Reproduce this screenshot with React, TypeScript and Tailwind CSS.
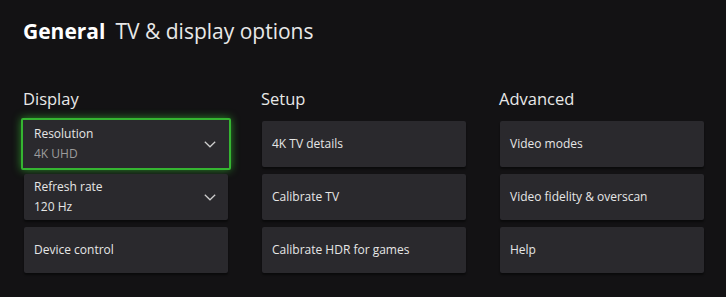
import React from "react";

const Chevron = () => (
  <svg width="12" height="7" viewBox="0 0 12 7" fill="none" className="shrink-0">
    <path d="M0.8 0.8 L6 5.8 L11.2 0.8" stroke="#cfcfcf" strokeWidth="1.2" />
  </svg>
);

type Item = { label: string; value?: string; valueDim?: boolean; dropdown?: boolean; focused?: boolean };

const Tile = ({ item }: { item: Item }) => {
  const base = "flex items-center justify-between rounded-[2px] bg-[#2a292d]";
  const cls = item.focused
    ? `${base} h-[52px] -mx-[3px] -my-[3px] pl-[11px] pr-[13px] border-2 border-[#35b531] shadow-[0_0_8px_rgba(53,190,49,0.7)]`
    : `${base} h-[46px] pl-[10px] pr-[12px] shadow-[0_2px_2px_rgba(0,0,0,0.45)]`;
  return (
    <div className={cls}>
      <div className="flex flex-col text-[12px] leading-[20px]">
        <span className="text-[#e6e6e6]">{item.label}</span>
        {item.value && (
          <span className={item.valueDim ? "text-[#9c9c9c]" : "text-[#e6e6e6]"}>{item.value}</span>
        )}
      </div>
      {item.dropdown && <Chevron />}
    </div>
  );
};

const columns: { title: string; items: Item[] }[] = [
  {
    title: "Display",
    items: [
      { label: "Resolution", value: "4K UHD", valueDim: true, dropdown: true, focused: true },
      { label: "Refresh rate", value: "120 Hz", dropdown: true },
      { label: "Device control" },
    ],
  },
  {
    title: "Setup",
    items: [{ label: "4K TV details" }, { label: "Calibrate TV" }, { label: "Calibrate HDR for games" }],
  },
  {
    title: "Advanced",
    items: [{ label: "Video modes" }, { label: "Video fidelity & overscan" }, { label: "Help" }],
  },
];

export default function App() {
  return (
    <div
      className="w-full h-screen bg-[#131214] text-[#ececec] overflow-hidden"
      style={{ fontFamily: '"Open Sans", "Noto Sans", sans-serif' }}
    >
      <div className="pt-[17px] pl-[23px] flex items-baseline gap-[10px] leading-[29px]">
        <span className="text-[21px] font-bold text-white">General</span>
        <span className="text-[21px] text-[#e8e8e8]">TV &amp; display options</span>
      </div>
      <div className="mt-[42px] pl-[24px] grid grid-cols-[204px_204px_204px] gap-x-[34px]">
        {columns.map((col) => (
          <div key={col.title} className="flex flex-col">
            <div className="-ml-px text-[16.5px] leading-[22px] text-[#e8e8e8] mb-[11px]">{col.title}</div>
            <div className="flex flex-col gap-[7px]">
              {col.items.map((it) => (
                <Tile key={it.label} item={it} />
              ))}
            </div>
          </div>
        ))}
      </div>
    </div>
  );
}
